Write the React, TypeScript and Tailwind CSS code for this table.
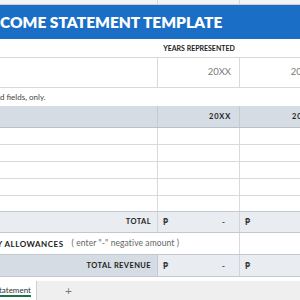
import React from "react";

const font = { fontFamily: '"Lato", "DejaVu Sans", sans-serif' };

function Cell({ w, children, className = "" }: { w: string; children?: React.ReactNode; className?: string }) {
  return <div className={`${w} shrink-0 h-full flex items-center ${className}`}>{children}</div>;
}

function BlankRow({ h }: { h: string }) {
  return (
    <div className={`flex ${h} border-b border-[#d9d9d9]`}>
      <Cell w="w-[158px]" className="border-r border-[#d9d9d9]" />
      <Cell w="w-[82px]" className="border-r border-[#d9d9d9]" />
      <Cell w="w-[82px]" />
    </div>
  );
}

function PesoCells({ bg }: { bg: string }) {
  return (
    <>
      <Cell w="w-[82px]" className={`${bg} border-r border-[#d0d5db] pl-[5px] pr-[14px] justify-between`}>
        <span className="text-[9px] font-bold text-[#333]">₱</span>
        <span className="text-[9px] text-[#333]">-</span>
      </Cell>
      <Cell w="w-[82px]" className={`${bg} pl-[5px]`}>
        <span className="text-[9px] font-bold text-[#333]">₱</span>
      </Cell>
    </>
  );
}

export default function App() {
  return (
    <div className="w-[300px] h-[300px] overflow-hidden bg-white flex flex-col" style={font}>
      {/* column letter strip */}
      <div className="flex h-[5px] shrink-0 bg-[#f3f3f3] border-b border-[#cfcfcf] overflow-hidden">
        <div className="w-[158px] shrink-0 border-r border-[#d6d6d6]" />
        <div className="w-[82px] shrink-0 border-r border-[#d6d6d6]" />
        <div className="w-[82px] shrink-0" />
      </div>

      {/* title */}
      <div className="h-[34px] shrink-0 bg-[#1a6ec5] flex items-center overflow-hidden">
        <span className="text-white font-extrabold text-[15.5px] tracking-[0px] whitespace-nowrap leading-none pt-[1px]">
          COME STATEMENT TEMPLATE
        </span>
      </div>

      {/* years represented */}
      <div className="flex h-[19px] shrink-0 border-b border-[#d9d9d9]">
        <Cell w="w-[158px]" />
        <Cell w="w-[82px]" className="justify-center">
          <span className="text-[7px] font-bold text-[#222] whitespace-nowrap">YEARS REPRESENTED</span>
        </Cell>
        <Cell w="w-[82px]" />
      </div>

      {/* year inputs */}
      <div className="flex h-[30px] shrink-0 border-b border-[#d9d9d9]">
        <Cell w="w-[158px]" className="border-r border-[#d9d9d9]" />
        <Cell w="w-[82px]" className="border-r border-[#d9d9d9] justify-end pr-[8px]">
          <span className="text-[9.5px] text-[#7a7a7a]">20XX</span>
        </Cell>
        <Cell w="w-[82px]" className="justify-end pr-[8px]">
          <span className="text-[9.5px] text-[#7a7a7a]">20XX</span>
        </Cell>
      </div>

      {/* note */}
      <div className="flex h-[18px] shrink-0 items-center">
        <span className="text-[8px] text-[#444] whitespace-nowrap">d fields, only.</span>
      </div>

      {/* section header */}
      <div className="flex h-[22px] shrink-0 bg-[#d6dce4] border-b border-[#b9c0c8]">
        <Cell w="w-[158px]" className="border-r border-[#c5cbd3]" />
        <Cell w="w-[82px]" className="border-r border-[#c5cbd3] justify-end pr-[8px]">
          <span className="text-[7.5px] font-bold text-[#222] tracking-[0.8px]">20XX</span>
        </Cell>
        <Cell w="w-[82px]" className="justify-end pr-[8px]">
          <span className="text-[7.5px] font-bold text-[#222] tracking-[0.8px]">20XX</span>
        </Cell>
      </div>

      <BlankRow h="h-[17px]" />
      <BlankRow h="h-[17px]" />
      <BlankRow h="h-[17px]" />
      <BlankRow h="h-[17px]" />
      <div className="flex h-[16px] shrink-0 border-b border-[#c2c8cf]">
        <Cell w="w-[158px]" className="border-r border-[#d9d9d9]" />
        <Cell w="w-[82px]" className="border-r border-[#d9d9d9]" />
        <Cell w="w-[82px]" />
      </div>

      {/* total */}
      <div className="flex h-[21px] shrink-0 border-b border-[#c2c8cf] bg-[#e9ecf0]">
        <Cell w="w-[158px]" className="justify-end pr-[6px] border-r border-[#d0d5db]">
          <span className="text-[7.5px] font-bold text-[#222] tracking-[0.4px]">TOTAL</span>
        </Cell>
        <PesoCells bg="bg-[#e9ecf0]" />
      </div>

      {/* allowances */}
      <div className="flex h-[22px] shrink-0 border-b border-[#c2c8cf]">
        <div className="w-[240px] shrink-0 h-full flex items-center border-r border-[#d9d9d9] whitespace-nowrap">
          <span className="text-[8px] font-bold text-[#222] tracking-[0.5px] ml-[-3px]">Y ALLOWANCES</span>
          <span className="text-[8.5px] text-[#666] tracking-[0.1px] ml-[8px]">( enter "-" negative amount )</span>
        </div>
        <Cell w="w-[82px]" />
      </div>

      {/* total revenue */}
      <div className="flex h-[22px] shrink-0 border-b border-[#c2c8cf]">
        <Cell w="w-[158px]" className="bg-[#d6dce4] justify-end pr-[6px] border-r border-[#c5cbd3]">
          <span className="text-[7.5px] font-bold text-[#222] tracking-[0.4px]">TOTAL REVENUE</span>
        </Cell>
        <PesoCells bg="bg-[#e9ecf0]" />
      </div>

      <div className="h-[4px] shrink-0" />

      {/* sheet tabs */}
      <div className="flex-1 bg-[#efefef] flex items-stretch">
        <div className="w-[37px] bg-white border-r border-[#cfcfcf] flex items-center">
          <span className="text-[8px] text-[#333] border-b-[2px] border-[#1e7145] leading-[10px] ml-[-1px]">tatement</span>
        </div>
        <div className="ml-[28px] flex items-center text-[12px] text-[#777] leading-none">+</div>
      </div>
    </div>
  );
}
